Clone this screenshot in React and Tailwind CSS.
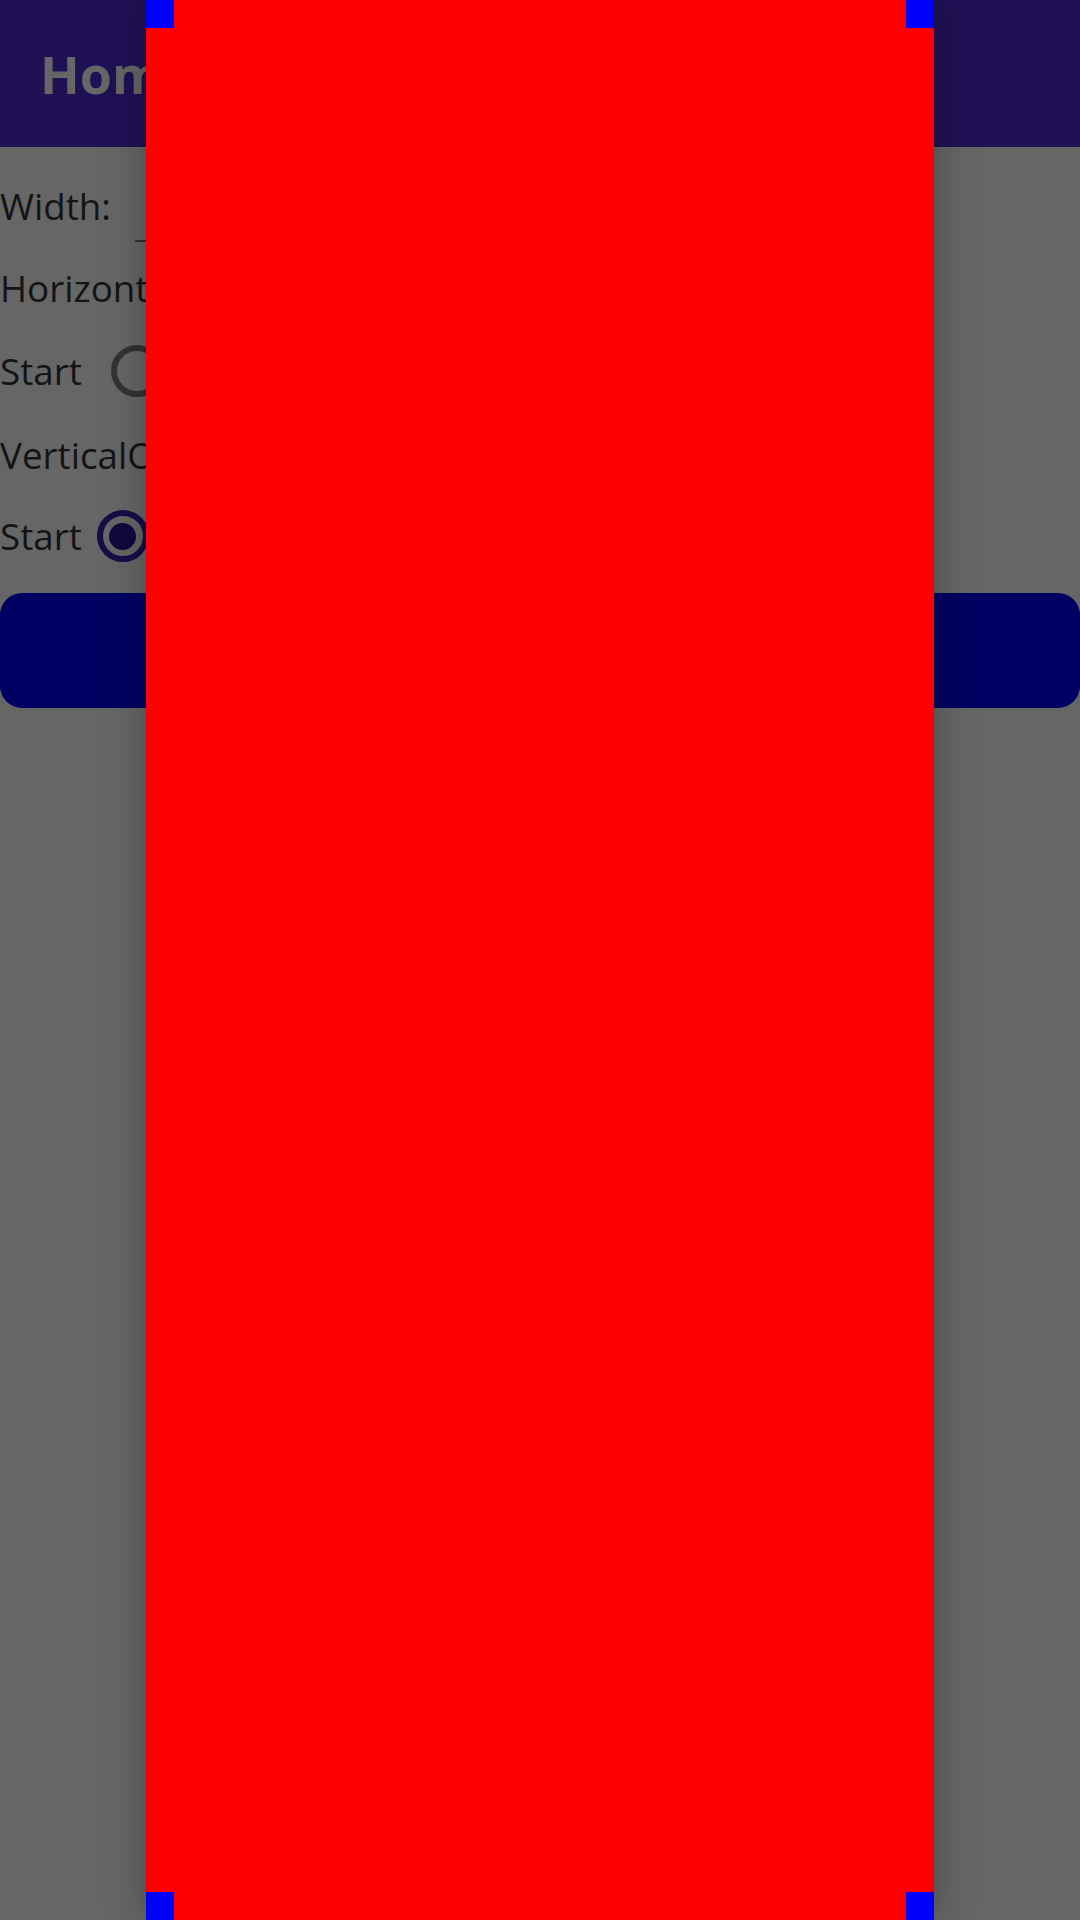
import React from "react";

const Radio = ({ checked }) => {
  if (checked) {
    return (
      <div className="w-[52px] h-[52px] rounded-full border-[6px] border-[#170d47] flex items-center justify-center shrink-0">
        <div className="w-[27px] h-[27px] rounded-full bg-[#10083a]" />
      </div>
    );
  }
  return <div className="w-[52px] h-[52px] rounded-full border-[6px] border-[#333333] shrink-0" />;
};

const App = () => {
  return (
    <div className="relative w-[1080px] h-[1920px] overflow-hidden bg-[#666666] font-['Open_Sans',sans-serif] text-[#141414]">
      {/* page under the overlay */}
      <div className="h-[147px] bg-[#201155] flex items-center pl-[40px]">
        <h1 className="text-[52px] font-bold leading-none text-[#666666]">Home</h1>
      </div>

      <div className="flex flex-col text-[36.75px] leading-none">
        <div className="h-[83px] mt-[18px] flex items-center">
          <span>Width:</span>
          <div className="ml-[24px] w-[500px] h-[2px] bg-[#333333] self-end mb-[6px]" />
        </div>
        <div className="h-[81px] flex items-center">
          <span>HorizontalOptions</span>
        </div>
        <div className="h-[84px] flex items-center">
          <span>Start</span>
          <div className="ml-[29px]">
            <Radio />
          </div>
        </div>
        <div className="h-[84px] flex items-center">
          <span>VerticalOptions</span>
        </div>
        <div className="h-[78px] flex items-center">
          <span>Start</span>
          <div className="ml-[15px]">
            <Radio checked />
          </div>
        </div>
        <button className="mt-[18px] h-[115px] w-full rounded-[22px] bg-[#000062]" />
      </div>

      {/* popup */}
      <div className="absolute top-0 left-[146px] w-[788px] h-[1920px] bg-[#ff0000] shadow-[0_0_40px_rgba(0,0,0,0.3)]">
        <div className="absolute top-0 left-0 w-[28px] h-[28px] bg-[#0000ff]" />
        <div className="absolute top-0 right-0 w-[28px] h-[28px] bg-[#0000ff]" />
        <div className="absolute bottom-0 left-0 w-[28px] h-[28px] bg-[#0000ff]" />
        <div className="absolute bottom-0 right-0 w-[28px] h-[28px] bg-[#0000ff]" />
      </div>
    </div>
  );
};

export default App;
